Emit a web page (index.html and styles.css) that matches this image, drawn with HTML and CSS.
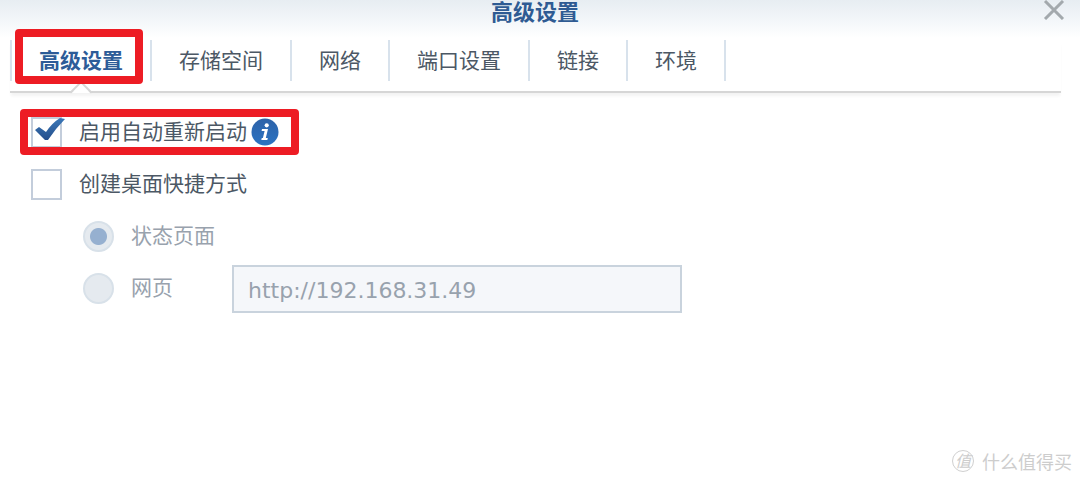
FILE: index.html
```html
<!DOCTYPE html>
<html lang="zh-CN">
<head>
<meta charset="utf-8">
<meta name="viewport" content="width=device-width, initial-scale=1">
<title>高级设置</title>
<link rel="stylesheet" href="styles.css">
</head>
<body class="page">
<main class="dialog">
  <header class="header">
    <h1 class="title">高级设置</h1>
    <button class="close" type="button" aria-label="关闭">
      <svg class="close-icon" viewBox="0 0 22 20" aria-hidden="true"><path d="M2 1 20 19M20 1 2 19"/></svg>
    </button>
  </header>
  <nav class="tabs">
    <button class="tab active" type="button">高级设置</button>
    <button class="tab" type="button">存储空间</button>
    <button class="tab" type="button">网络</button>
    <button class="tab" type="button">端口设置</button>
    <button class="tab" type="button">链接</button>
    <button class="tab" type="button">环境</button>
  </nav>
  <form class="form">
    <div class="row marked">
      <span class="tick">
        <input class="check" type="checkbox" id="restart" checked>
        <svg class="tick-mark" viewBox="0 0 32 24" aria-hidden="true">
          <defs><linearGradient id="tickFill" x1="0" y1="0" x2="0" y2="1"><stop offset="0" stop-color="#3b78b8"/><stop offset="1" stop-color="#254f8c"/></linearGradient></defs>
          <path fill="url(#tickFill)" d="M1 12 5 9 12 14Q18 5 26 0L31 1Q22 10 14 22L11 22Z"/>
        </svg>
      </span>
      <label class="label" for="restart">启用自动重新启动</label>
      <svg class="info" viewBox="0 0 28 28" aria-hidden="true">
        <defs><linearGradient id="infoFill" x1="0" y1="0" x2="0" y2="1"><stop offset="0" stop-color="#2d62a8"/><stop offset="1" stop-color="#2b73c2"/></linearGradient></defs>
        <circle cx="14" cy="14" r="13.5" fill="url(#infoFill)"/>
        <circle cx="15.7" cy="7.3" r="2.1" fill="#fff"/>
        <path fill="#fff" d="M11 11h6l-2.2 9h2l-.5 2h-6l.5-2h1.100l1.7-7H10.600z"/>
      </svg>
    </div>
    <div class="row">
      <input class="check" type="checkbox" id="shortcut">
      <label class="label" for="shortcut">创建桌面快捷方式</label>
    </div>
    <div class="row nested">
      <input class="radio" type="radio" name="target" id="status" checked disabled>
      <label class="label muted" for="status">状态页面</label>
    </div>
    <div class="row nested">
      <input class="radio" type="radio" name="target" id="web" disabled>
      <label class="label muted web-label" for="web">网页</label>
      <input class="url" type="text" value="http://192.168.31.49" aria-label="网页" disabled>
    </div>
  </form>
  <footer class="watermark">
    <span class="seal">值</span>
    <span>什么值得买</span>
  </footer>
</main>
</body>
</html>
```

FILE: styles.css
```css
*,
*::before,
*::after {
  box-sizing: border-box;
}

.page {
  margin: 0;
  background: #fff;
  color: #4c5865;
  font-family: "Noto Sans CJK SC", sans-serif;
  font-size: 21px;
}

.dialog {
  display: flex;
  flex-direction: column;
  min-height: 100vh;
  background: linear-gradient(#e7edf2, #f4f7fa 22px, #fff 38px);
}

.header {
  display: grid;
  grid-template-columns: 1fr auto 1fr;
  height: 40px;
  padding: 0 15px 0 5px;
}

.title {
  grid-column: 2;
  margin: 0;
  color: #2f5b93;
  font-size: 22px;
  font-weight: 700;
  line-height: 20px;
}

.close {
  justify-self: end;
  align-self: start;
  display: flex;
  padding: 0;
  border: 0;
  background: none;
}

.close-icon {
  width: 22px;
  height: 20px;
  fill: none;
  stroke: #a3a9ad;
  stroke-width: 3;
}

.tabs {
  display: flex;
  margin: 0 19px 0 10px;
  padding-bottom: 10px;
  border-bottom: 2px solid #d6d6d6;
  box-shadow: 0 4px 3px -1px #f3f3f3;
}

.tab {
  position: relative;
  height: 41px;
  padding: 0 27px 3px;
  border: 0;
  border-left: 2px solid #d8e2ec;
  background: none;
  color: #4c5865;
  font: inherit;
  line-height: 38px;
}

.tab:last-child {
  border-right: 2px solid #d8e2ec;
}

.tab.active {
  color: #2d5c98;
  font-weight: 700;
}

/* pointer under the selected tab */
.tab.active::before {
  content: "";
  position: absolute;
  top: 44px;
  left: 61px;
  width: 16px;
  height: 16px;
  border: solid #d6d6d6;
  border-width: 2px 0 0 2px;
  background: linear-gradient(135deg, #fff 50%, transparent 50%);
  transform: rotate(45deg);
}

.tab.active::after,
.marked::after {
  content: "";
  position: absolute;
  border: 8px solid #ed1c24;
  border-radius: 4px;
  pointer-events: none;
}

.tab.active::after {
  inset: -11px 7px -3px 3px;
}

.form {
  padding: 13px 31px 0;
}

.row {
  position: relative;
  display: flex;
  align-items: center;
  height: 52px;
}

.marked::after {
  top: 3px;
  left: -11px;
  width: 279px;
  height: 46px;
}

.nested {
  padding-left: 52px;
}

.check,
.radio {
  appearance: none;
  flex: none;
  width: 31px;
  height: 31px;
  margin: 0;
  border: 2px solid #c3cddb;
  background: #fff;
}

.radio {
  border-color: #d8e1e9;
  border-radius: 50%;
  background: #e5eaef;
}

.radio:checked {
  background: radial-gradient(circle, #96b0d0 8px, #e5eaef 9px);
}

.tick {
  position: relative;
  display: flex;
}

.tick-mark {
  position: absolute;
  top: 1px;
  left: 3px;
  width: 32px;
  height: 24px;
  pointer-events: none;
}

.label {
  margin-left: 17px;
  padding-bottom: 4px;
  line-height: 30px;
}

.muted {
  color: #98a2ad;
}

.info {
  width: 28px;
  height: 28px;
  margin-left: 4px;
}

.web-label {
  width: 101px;
}

.url {
  width: 450px;
  min-width: 0;
  height: 48px;
  margin-top: 2px;
  padding: 2px 14px 0;
  border: 2px solid #c9d3dd;
  border-radius: 0;
  background: #f5f7fa;
  color: #98a2ad;
  font-family: "DejaVu Sans", sans-serif;
  font-size: 22px;
}

.watermark {
  display: flex;
  align-items: center;
  justify-content: flex-end;
  gap: 8px;
  margin-top: auto;
  padding: 0 8px 10px;
  color: #cdcdcd;
  font-size: 18px;
  line-height: 26px;
}

.seal {
  width: 22px;
  height: 22px;
  border: 1px solid #d0d0d0;
  border-radius: 50%;
  font-size: 16px;
  font-style: italic;
  line-height: 19px;
  text-align: center;
}
```
